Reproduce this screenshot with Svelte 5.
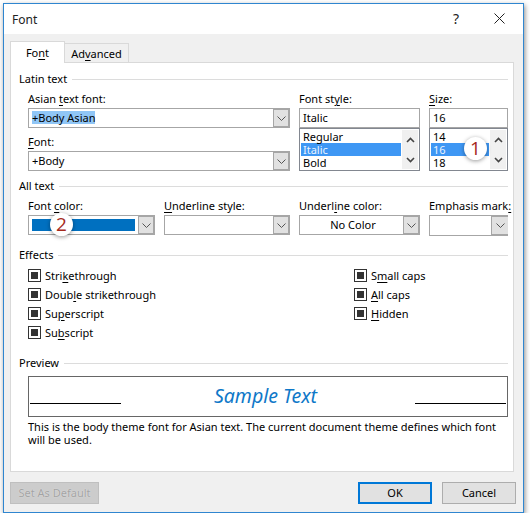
<script lang="ts">
	const leftEffects = [
		{ pre: 'Stri', key: 'k', post: 'ethrough' },
		{ pre: 'Doub', key: 'l', post: 'e strikethrough' },
		{ pre: 'Su', key: 'p', post: 'erscript' },
		{ pre: 'Su', key: 'b', post: 'script' }
	];
	const rightEffects = [
		{ pre: 'S', key: 'm', post: 'all caps' },
		{ pre: '', key: 'A', post: 'll caps' },
		{ pre: '', key: 'H', post: 'idden' }
	];
	const styles = ['Regular', 'Italic', 'Bold'];
	const sizes = ['14', '16', '18'];
</script>

{#snippet chevron()}
	<svg class="chev" width="9" height="5" viewBox="0 0 9 5"><path d="M.5.5l4 4 4-4" fill="none" stroke="#555" /></svg>
{/snippet}

{#snippet dropBtn()}
	<span class="drop">{@render chevron()}</span>
{/snippet}

{#snippet scrollbar()}
	<div class="scroll">
		<svg width="9" height="6" viewBox="0 0 9 6"><path d="M1 5l3.5-3.5L8 5" fill="none" stroke="#444" stroke-width="1.6" /></svg>
		<svg width="9" height="6" viewBox="0 0 9 6"><path d="M1 1l3.5 3.5L8 1" fill="none" stroke="#444" stroke-width="1.6" /></svg>
	</div>
{/snippet}

{#snippet effect(item: { pre: string; key: string; post: string })}
	<div class="check-row">
		<span class="check"><span class="fill"></span></span>
		<span>{item.pre}<u>{item.key}</u>{item.post}</span>
	</div>
{/snippet}

<div class="win">
	<header class="title">
		<span class="name">Font</span>
		<span class="help">?</span>
		<svg class="close" width="11" height="11" viewBox="0 0 11 11"><path d="M.5.5l10 10M10.5.5l-10 10" stroke="#222" fill="none" /></svg>
	</header>

	<div class="body">
		<div class="tabs">
			<div class="tab active">Fo<u>n</u>t</div>
			<div class="tab">Ad<u>v</u>anced</div>
		</div>

		<div class="panel">
			<div class="heading"><span>Latin text</span><i></i></div>
			<div class="latin">
				<div class="col">
					<div class="label">Asian <u>t</u>ext font:</div>
					<div class="combo"><span class="value"><span class="sel">+Body Asian</span></span>{@render dropBtn()}</div>
					<div class="label second"><u>F</u>ont:</div>
					<div class="combo"><span class="value">+Body</span>{@render dropBtn()}</div>
				</div>
				<div class="col">
					<div class="label">Font st<u>y</u>le:</div>
					<div class="input">Italic</div>
					<div class="list">
						<div class="rows">
							{#each styles as s}
								<div class="item" class:on={s === 'Italic'}>{s}</div>
							{/each}
						</div>
						{@render scrollbar()}
					</div>
				</div>
				<div class="col">
					<div class="label"><u>S</u>ize:</div>
					<div class="input">16</div>
					<div class="list">
						<div class="rows">
							{#each sizes as s}
								<div class="item" class:on={s === '16'}>{s}</div>
							{/each}
						</div>
						{@render scrollbar()}
						<span class="badge one">1</span>
					</div>
				</div>
			</div>

			<div class="heading gap8"><span>All text</span><i></i></div>
			<div class="alltext">
				<div class="col">
					<div class="label">Font <u>c</u>olor:</div>
					<div class="combo">
						<span class="value swatch-wrap"><span class="swatch"></span></span>{@render dropBtn()}
						<span class="badge two">2</span>
					</div>
				</div>
				<div class="col">
					<div class="label"><u>U</u>nderline style:</div>
					<div class="combo"><span class="value"></span>{@render dropBtn()}</div>
				</div>
				<div class="col">
					<div class="label">Underl<u>i</u>ne color:</div>
					<div class="combo"><span class="value center">No Color</span>{@render dropBtn()}</div>
				</div>
				<div class="col">
					<div class="label">Emphasis mark<u>:</u></div>
					<div class="combo tall"><span class="value"></span>{@render dropBtn()}</div>
				</div>
			</div>

			<div class="heading gap12"><span>Effects</span><i></i></div>
			<div class="effects">
				<div>
					{#each leftEffects as item}
						{@render effect(item)}
					{/each}
				</div>
				<div>
					{#each rightEffects as item}
						{@render effect(item)}
					{/each}
				</div>
			</div>

			<div class="heading gap14"><span>Preview</span><i></i></div>
			<div class="preview">
				<span class="rule"></span>
				<span class="sample">Sample Text</span>
				<span class="rule"></span>
			</div>
			<p class="desc">This is the body theme font for Asian text. The current document theme defines which font will be used.</p>
		</div>

		<div class="buttons">
			<button class="btn disabled" disabled>Set As Default</button>
			<div class="spacer"></div>
			<button class="btn ok">OK</button>
			<button class="btn">Cancel</button>
		</div>
	</div>
</div>

<style>
	:global(body) {
		background: #fff;
	}

	.win {
		box-sizing: border-box;
		width: 521px;
		height: 510px;
		margin: 3px 0 0 3px;
		border: 1px solid #2f86d0;
		box-shadow: 1px 2px 5px rgba(0, 0, 0, 0.45);
		display: flex;
		flex-direction: column;
		font-family: 'Noto Sans', sans-serif;
		font-size: 11px;
		color: #000;
		background: #f0f0f0;
	}

	u {
		text-underline-offset: 2px;
	}

	.title {
		height: 30px;
		flex: none;
		box-sizing: border-box;
		background: #fff;
		display: flex;
		align-items: center;
		padding: 0 18px 2px 8px;
		font-size: 12px;
		color: #222;
	}

	.name {
		margin-top: 2px;
	}

	.help {
		margin-left: auto;
		margin-right: 35px;
		font-size: 14px;
	}

	.body {
		flex: 1;
		padding: 7px 9px 8px 6px;
		display: flex;
		flex-direction: column;
	}

	.tabs {
		display: flex;
		align-items: flex-end;
		height: 21px;
		position: relative;
		z-index: 1;
	}

	.tab {
		box-sizing: border-box;
		width: 64px;
		height: 19px;
		border: 1px solid #d9d9d9;
		border-bottom: 0;
		border-left: 0;
		text-align: center;
		line-height: 20px;
	}

	.tab.active {
		width: 55px;
		height: 22px;
		margin-bottom: -1px;
		background: #fff;
		border-left: 1px solid #d9d9d9;
		line-height: 22px;
	}

	.panel {
		flex: 1;
		box-sizing: border-box;
		background: #fff;
		border: 1px solid #d9d9d9;
		padding: 9px 5px 0 8px;
	}

	.heading {
		display: flex;
		align-items: center;
		gap: 5px;
		height: 14px;
		line-height: 14px;
	}

	.heading i {
		flex: 1;
		height: 1px;
		background: #dcdcdc;
	}

	.gap8 {
		margin-top: 8px;
	}

	.gap12 {
		margin-top: 12px;
	}

	.gap14 {
		margin-top: 14px;
	}

	.latin,
	.alltext {
		display: grid;
		grid-template-columns: 262px 121px 79px;
		column-gap: 9px;
		margin: 6px 0 0 9px;
	}

	.alltext {
		grid-template-columns: 127px 126px 121px 79px;
	}

	.label {
		height: 16px;
		line-height: 13px;
		white-space: nowrap;
	}

	.label.second {
		margin-top: 7px;
	}

	.combo {
		box-sizing: border-box;
		height: 20px;
		display: flex;
		border: 1px solid #a6a6a6;
		position: relative;
	}

	.combo.tall {
		height: 21px;
		border-right: 0;
	}

	.combo.tall .drop {
		margin-right: 0;
		border-right: 0;
	}

	.value {
		flex: 1;
		min-width: 0;
		line-height: 18px;
		padding-left: 3px;
		white-space: nowrap;
	}

	.value.center {
		text-align: center;
	}

	.sel {
		display: inline-block;
		background: #90c6f6;
		line-height: 13px;
	}

	.swatch-wrap {
		padding: 3px;
	}

	.swatch {
		display: block;
		height: 12px;
		background: #0070c0;
	}

	.drop {
		box-sizing: border-box;
		width: 17px;
		margin: -1px -1px -1px 0;
		background: #e1e1e1;
		border: 2px solid #a6a6a6;
		border-left-width: 1px;
		display: flex;
		align-items: center;
		justify-content: center;
	}

	.input {
		box-sizing: border-box;
		height: 20px;
		border: 1px solid #a6a6a6;
		line-height: 18px;
		padding-left: 3px;
	}

	.list {
		box-sizing: border-box;
		height: 43px;
		border: 1px solid #828790;
		padding: 1px;
		display: flex;
		position: relative;
	}

	.rows {
		flex: 1;
		min-width: 0;
	}

	.item {
		height: 13px;
		line-height: 13px;
		padding-left: 2px;
	}

	.item.on {
		background: #3e97f4;
		color: #eaf4ff;
	}

	.scroll {
		width: 16px;
		margin-left: 1px;
		background: #f0f0f0;
		display: flex;
		flex-direction: column;
		align-items: center;
		justify-content: space-between;
		padding: 7px 0 6px;
		box-sizing: border-box;
	}

	.badge {
		position: absolute;
		box-sizing: border-box;
		width: 23px;
		height: 23px;
		border-radius: 50%;
		background: #fff;
		box-shadow: 0 1px 4px rgba(0, 0, 0, 0.4);
		color: #a5291c;
		font-family: 'Open Sans', sans-serif;
		font-size: 19px;
		line-height: 23px;
		text-align: center;
	}

	.badge.one {
		left: 34px;
		top: 8px;
	}

	.badge.two {
		left: 21px;
		top: -3px;
	}

	.effects {
		display: grid;
		grid-template-columns: 326px 1fr;
		margin: 4px 0 0 9px;
	}

	.check-row {
		height: 19px;
		display: flex;
		align-items: center;
		gap: 4px;
	}

	.check {
		box-sizing: border-box;
		width: 13px;
		height: 13px;
		border: 1px solid #333;
		display: flex;
		align-items: center;
		justify-content: center;
	}

	.fill {
		width: 7px;
		height: 7px;
		background: #333;
	}

	.preview {
		box-sizing: border-box;
		height: 41px;
		margin: 6px 0 0 9px;
		border: 1px solid #666;
		padding: 0 1px;
		display: flex;
		justify-content: space-between;
		align-items: center;
	}

	.rule {
		width: 91px;
		height: 1px;
		background: #000;
		margin-top: 13px;
	}

	.sample {
		font-style: italic;
		font-size: 19.5px;
		color: #0f78c8;
		margin: 0 5px 2px 0;
	}

	.desc {
		margin: 3px 0 0 9px;
		line-height: 13px;
		width: 480px;
	}

	.buttons {
		display: flex;
		gap: 10px;
		margin: 10px -2px 0 0;
	}

	.spacer {
		flex: 1;
	}

	.btn {
		box-sizing: border-box;
		width: 74px;
		height: 22px;
		padding: 0;
		border: 1px solid #adadad;
		background: #e1e1e1;
		color: #000;
		font: inherit;
		line-height: 18px;
	}

	.btn.ok {
		border: 2px solid #0078d7;
	}

	.btn.disabled {
		width: 89px;
		background: #cccccc;
		border-color: #bfbfbf;
		color: #a3a3a3;
		text-shadow: 0 0 1px #eee;
	}
</style>
